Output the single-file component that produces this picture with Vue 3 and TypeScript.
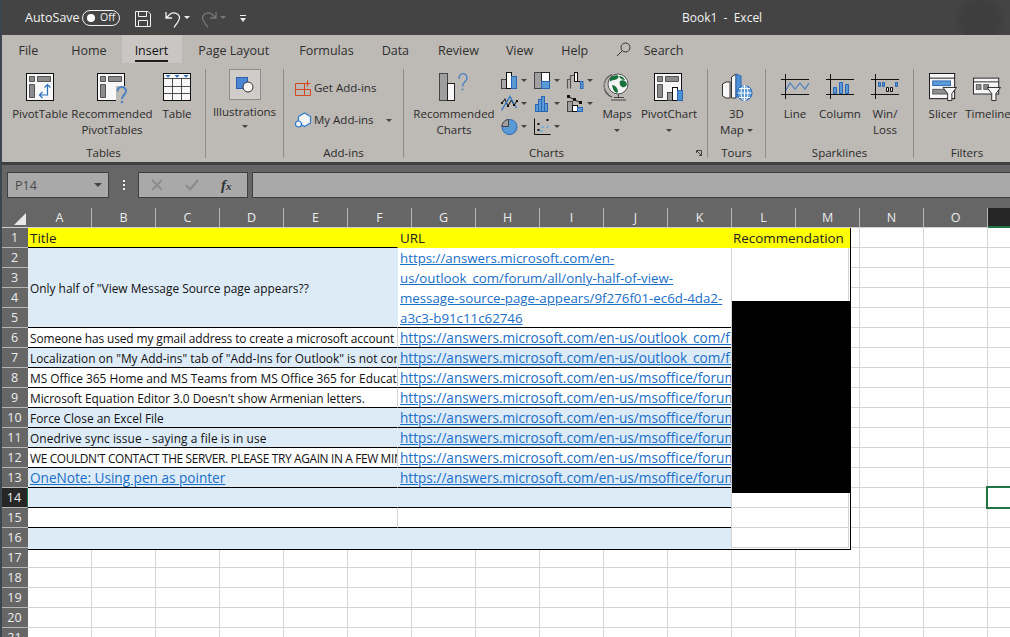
<script setup lang="ts">
interface Row { n: number; title: string; url: string; blue: boolean; titleLink?: boolean; fit?: string }
const base1 = 'https://answers.microsoft.com/en-us/outlook_com/forum/all/'
const base2 = 'https://answers.microsoft.com/en-us/msoffice/forum/all/'
const rows: Row[] = [
  { n: 6, title: 'Someone has used my gmail address to create a microsoft account', url: base1, blue: false, fit: 'tight' },
  { n: 7, title: 'Localization on "My Add-ins" tab of "Add-Ins for Outlook" is not correct', url: base1, blue: true },
  { n: 8, title: 'MS Office 365 Home and MS Teams from MS Office 365 for Education', url: base2, blue: false },
  { n: 9, title: "Microsoft Equation Editor 3.0 Doesn't show Armenian letters.", url: base2, blue: false, fit: 'slight' },
  { n: 10, title: 'Force Close an Excel File', url: base2, blue: true },
  { n: 11, title: 'Onedrive sync issue - saying a file is in use', url: base2, blue: true, fit: 'loose' },
  { n: 12, title: "WE COULDN'T CONTACT THE SERVER. PLEASE TRY AGAIN IN A FEW MINUTES", url: base2, blue: false, fit: 'caps' },
  { n: 13, title: 'OneNote: Using pen as pointer', url: base2, blue: true, titleLink: true },
  { n: 14, title: '', url: '', blue: true },
  { n: 15, title: '', url: '', blue: false },
  { n: 16, title: '', url: '', blue: true },
]
const tabs = ['Home', 'Insert', 'Page Layout', 'Formulas', 'Data', 'Review', 'View', 'Help']
const cols = 'ABCDEFGHIJKLMNOP'.split('')
const rowNums = Array.from({ length: 21 }, (_, i) => i + 1)
</script>

<template>
  <div class="app">
    <div class="edge"></div>
    <div class="main">
      <header class="titlebar">
        <span class="autosave">AutoSave</span>
        <span class="toggle"><i class="dot"></i><span class="off">Off</span></span>
        <svg class="qa qa-save" width="16" height="16" viewBox="0 0 16 16" fill="none" stroke="#f2f2f2">
          <path d="M.5.5H13L15.500 3V15.500H.5Z" /><path d="M3.500.5V5.500H11.500V.5M3.500 15.500V9.500H12.500V15.500" />
        </svg>
        <svg class="qa qa-undo" width="16" height="18" viewBox="0 0 16 18" fill="none" stroke="#f2f2f2" stroke-width="1.300">
          <path d="M1 1V7H7M1 7L5 3.200C8 1 13 1.800 14.400 5.500C15.400 9 12 12 9 16.500" />
        </svg>
        <i class="tcaret light"></i>
        <svg class="qa qa-redo" width="16" height="18" viewBox="0 0 16 18" fill="none" stroke="#777" stroke-width="1.300">
          <path d="M15 1V7H9M15 7L11 3.200C8 1 3 1.800 1.600 5.500C.6 9 4 12 7 16.500" />
        </svg>
        <i class="tcaret dim"></i>
        <svg class="qa-more" width="6" height="8" viewBox="0 0 6 8"><path d="M0 .5H6" stroke="#eee" /><path d="M0 3H6L3 7Z" fill="#eee" /></svg>
        <span class="doc">Book1 &nbsp;-&nbsp; Excel</span>
      </header>

      <nav class="tabs">
        <span class="tab file">File</span>
        <span v-for="t in tabs" :key="t" class="tab" :class="{ active: t === 'Insert' }"><span class="tab-t">{{ t }}</span></span>
        <svg class="search-ic" width="15" height="15" viewBox="0 0 15 15" fill="none" stroke="#333"><circle cx="9.500" cy="5.500" r="4.500" /><path d="M6.300 8.700L1 14" /></svg>
        <span class="search">Search</span>
      </nav>

      <section class="ribbon">
        <div class="group g-tables">
          <div class="gbody">
            <div class="rb w60">
              <svg width="28" height="28" viewBox="0 0 28 28">
                <rect x=".5" y=".5" width="27" height="27" fill="#f7f7f7" stroke="#111" />
                <path d="M3.500 3.500H8.500V8.500H3.500ZM11.500 3.500H24.500V8.500H11.500ZM3.500 11.500H8.500V24.500H3.500Z" fill="#8c8c8c" stroke="#555" />
                <path d="M14 22H21.500V12M18.500 14.500L21.500 11.500L24.500 14.500M16.500 19L13.500 22L16.500 25" fill="none" stroke="#2b6fc0" stroke-width="1.200" />
              </svg>
              <span class="lb">PivotTable</span>
            </div>
            <div class="rb w84">
              <svg width="30" height="28" viewBox="0 0 30 28">
                <rect x=".5" y=".5" width="27" height="27" fill="#f7f7f7" stroke="#111" />
                <path d="M3.500 3.500H8.500V8.500H3.500ZM11.500 3.500H24.500V8.500H11.500ZM3.500 11.500H8.500V24.500H3.500Z" fill="#8c8c8c" stroke="#555" />
                <rect x="19" y="13" width="11" height="16" fill="#bdb9b5" />
                <path d="M20.500 18.500C20.500 12.500 29 12.500 29 18C29 22 25 21.500 25 26" fill="none" stroke="#4d82c4" stroke-width="2" />
                <circle cx="25" cy="29" r="1.300" fill="#4d82c4" />
              </svg>
              <span class="lb">Recommended<br />PivotTables</span>
            </div>
            <div class="rb w36 ml5">
              <svg width="28" height="28" viewBox="0 0 28 28">
                <rect x=".5" y=".5" width="27" height="27" fill="#f7f7f7" stroke="#111" />
                <path d="M.5 5.500H27.500M.5 13.500H27.500M.5 20.500H27.500M9.500 5.500V27.500M18.500 5.500V27.500" fill="none" stroke="#222" stroke-width=".8" />
                <path d="M2.500 2H7.500L5 4.700ZM11.500 2H16.500L14 4.700ZM20.500 2H25.500L23 4.700Z" fill="#2b6fc0" />
              </svg>
              <span class="lb">Table</span>
            </div>
          </div>
          <div class="gl">Tables</div>
        </div>

        <div class="group g-illus">
          <div class="gbody">
            <div class="illus">
              <span class="illus-box">
                <svg width="18" height="16" viewBox="0 0 18 16">
                  <rect x=".5" y=".5" width="11" height="11" fill="#4a86d4" stroke="#2c5fa8" />
                  <circle cx="12" cy="10" r="5" fill="#f7f7f7" stroke="#333" />
                </svg>
              </span>
              <span class="lb illus-lb">Illustrations</span>
              <i class="caret"></i>
            </div>
          </div>
          <div class="gl">&nbsp;</div>
        </div>

        <div class="group g-addins">
          <div class="gbody addin-list">
            <div class="addin">
              <svg width="16" height="16" viewBox="0 0 16 16" fill="none" stroke="#d1481f">
                <path d="M.5 3.500H9.500V15.500H.5ZM.5 9.500H15.500V15.500H9.500M9.500 9.500V3.500M12.500 .5V6.500M9.500 3.500H15.500" />
              </svg>
              <span class="lb">Get Add-ins</span>
            </div>
            <div class="addin">
              <svg width="16" height="16" viewBox="0 0 16 16" stroke="#2b79c9" stroke-width="1.200">
                <path d="M9.500 1L15.500 4.500V11L9.500 14.500L3.500 11V4.500Z" fill="#f4f4f4" />
                <circle cx="3.500" cy="12" r="3" fill="#f4f4f4" />
              </svg>
              <span class="lb">My Add-ins</span>
              <i class="caret addin-caret"></i>
            </div>
          </div>
          <div class="gl">Add-ins</div>
        </div>

        <div class="group g-charts">
          <div class="gbody">
            <div class="rb w84">
              <svg width="30" height="28" viewBox="0 0 30 28">
                <rect x=".5" y=".5" width="8" height="27" fill="#9f9f9f" stroke="#444" />
                <rect x="8.500" y="10.500" width="7" height="17" fill="#f8f8f8" stroke="#222" />
                <path d="M20 6C20 -1 28 -1 28 5C28 9 23.500 8.500 23.500 13.500" fill="none" stroke="#4d82c4" stroke-width="1.400" />
                <circle cx="23.500" cy="16.500" r="1" fill="#4d82c4" />
              </svg>
              <span class="lb">Recommended<br />Charts</span>
            </div>
            <div class="chart-grid">
              <div class="ci">
                <svg width="17" height="18" viewBox="0 0 17 18"><rect x=".5" y="7.500" width="5" height="9" fill="#a8a8a8" stroke="#444" /><rect x="5.500" y=".5" width="5" height="16" fill="#fff" stroke="#111" /><rect x="10.500" y="4.500" width="5" height="12" fill="#5b9bd5" stroke="#2a66b4" /></svg><i class="caret"></i>
              </div>
              <div class="ci">
                <svg width="17" height="18" viewBox="0 0 17 18"><rect x=".5" y=".5" width="7" height="16" fill="#a0a0a0" stroke="#444" /><rect x="7.500" y=".5" width="8" height="9" fill="#fff" stroke="#222" /><rect x="7.500" y="9.500" width="8" height="7" fill="#5b9bd5" stroke="#2a66b4" /></svg><i class="caret"></i>
              </div>
              <div class="ci">
                <svg width="17" height="18" viewBox="0 0 17 18" fill="none"><path d="M.5 16.500V7.500H3.500V3.500H8M3.500 16.500V7.500" stroke="#555" stroke-width="1.200" /><rect x="7.500" y=".5" width="3" height="9" fill="#fff" stroke="#111" /><path d="M10.500 9.500H14" stroke="#111" /><rect x="13.500" y="9.500" width="2.500" height="7" fill="#5b9bd5" stroke="#2a66b4" /></svg><i class="caret"></i>
              </div>
              <div class="ci">
                <svg width="17" height="18" viewBox="0 0 17 18" fill="none"><path d="M1 8L4 4L7 11L10.500 5L13 10L16 6" stroke="#222" stroke-width="1.100" /><path d="M.5 15.500L9 1.500L15.500 13" stroke="#2f74c6" stroke-width="1.300" /><path d="M0 7h2v2H0zM6 10h2v2H6zM12 9h2v2h-2zM15 5h2v2h-2z" fill="#111" /></svg><i class="caret"></i>
              </div>
              <div class="ci">
                <svg width="17" height="18" viewBox="0 0 17 18" fill="#5b9bd5" stroke="#2a66b4"><rect x="1.500" y="9.500" width="3" height="7" /><rect x="4.500" y="4.500" width="3" height="12" /><rect x="7.500" y="1.500" width="3" height="15" /><rect x="10.500" y="8.500" width="3" height="8" /></svg><i class="caret"></i>
              </div>
              <div class="ci">
                <svg width="17" height="18" viewBox="0 0 17 18"><rect x=".5" y="6.500" width="5" height="10" fill="#a0a0a0" stroke="#444" /><rect x="5.500" y="10.500" width="5" height="6" fill="#fff" stroke="#111" /><rect x="10.500" y="12.500" width="5" height="4" fill="#5b9bd5" stroke="#2a66b4" /><path d="M2 2L14 8" stroke="#222" /><path d="M0 0h3v3H0zM6 3h3v3H6zM12 6h3v3h-3z" fill="#111" /></svg><i class="caret"></i>
              </div>
              <div class="ci">
                <svg width="17" height="18" viewBox="0 0 17 18"><circle cx="8.500" cy="9" r="7.500" fill="#5b9bd5" stroke="#2a66b4" /><path d="M7.500 1.500A7 7 0 0 0 1 8.500H7.500Z" fill="#a0a0a0" stroke="#444" /></svg><i class="caret"></i>
              </div>
              <div class="ci">
                <svg width="17" height="18" viewBox="0 0 17 18"><path d="M.5 .5V16.500H16.500" fill="none" stroke="#111" /><path d="M3.500 5h2v2h-2zM12.500 1h2v2h-2zM3.500 11h2v2h-2z" fill="#111" /><path d="M7.500 8h2v2h-2zM12.500 8h2v2h-2zM6.500 12h2v2h-2z" fill="#6ab0e0" /></svg><i class="caret"></i>
              </div>
            </div>
            <div class="rb w34">
              <svg width="26" height="28" viewBox="0 0 26 28" fill="none">
                <path d="M8 1.500A12 12 0 0 0 8 24" stroke="#4a4a4a" stroke-width="1.200" />
                <path d="M5 4A10 10 0 0 0 5 21" stroke="#8a8a8a" stroke-width="1" />
                <circle cx="14" cy="11" r="10" fill="#f4f4f4" stroke="#333" stroke-width=".8" />
                <path d="M9 3C13 1 16 3 14 5C12 8 8 6 6 9C5 6 6 4 9 3ZM16 8C20 6 23 9 23 12C22 13 20 15 18 14C16 13 15 10 16 8ZM8 12C11 12 14 15 14 19C12 21 10 18 9 16Z" fill="#17713a" />
                <path d="M15 3C18 3 20 5 21 7C19 7 16 6 15 3Z" fill="#17713a" />
                <path d="M10 24.500H20M14.500 21V24.500M7 27H22" stroke="#444" stroke-width="1" />
              </svg>
              <span class="lb">Maps</span>
              <i class="caret lb-caret"></i>
            </div>
            <div class="rb w66">
              <svg width="30" height="28" viewBox="0 0 30 28">
                <rect x=".5" y=".5" width="27" height="27" fill="#f7f7f7" stroke="#111" />
                <path d="M3.500 3.500H8.500V8.500H3.500ZM11.500 3.500H24.500V8.500H11.500ZM3.500 11.500H8.500V24.500H3.500Z" fill="#8c8c8c" stroke="#555" />
                <rect x="13.500" y="19.500" width="5" height="8" fill="#999" stroke="#444" />
                <rect x="18.500" y="14.500" width="5" height="13" fill="#fff" stroke="#111" />
                <rect x="23.500" y="17.500" width="5" height="10" fill="#4f8fd4" stroke="#2a66b4" />
              </svg>
              <span class="lb">PivotChart</span>
              <i class="caret lb-caret"></i>
            </div>
          </div>
          <div class="gl gl-charts">Charts<svg class="launcher" width="6" height="6" viewBox="0 0 6 6"><path d="M.5 3V.5H5.500V5.500H3" fill="none" stroke="#444" /><path d="M.5 .5L5 5M3 5.500H5.500V3" fill="none" stroke="#444" /></svg></div>
        </div>

        <div class="group g-tours">
          <div class="gbody">
            <div class="rb w56">
              <svg width="32" height="28" viewBox="0 0 32 28">
                <path d="M1.500 11L5 9H9V25H5L1.500 23Z" fill="#f7f7f7" stroke="#333" />
                <path d="M10.500 4L15 1V25H10.500Z" fill="#f7f7f7" stroke="#333" />
                <path d="M15 1L20 3V17L15 25Z" fill="#4f8fd4" stroke="#2a66b4" />
                <circle cx="23.500" cy="20" r="7.500" fill="#5b9bd5" stroke="#2a66b4" />
                <path d="M16.500 20H30.500M23.500 12.500V27.500M18 15.500H29M18 24.500H29" stroke="#fff" fill="none" />
                <ellipse cx="23.500" cy="20" rx="3.500" ry="7.500" fill="none" stroke="#fff" />
              </svg>
              <span class="lb">3D<br />Map<i class="caret inline-caret"></i></span>
            </div>
          </div>
          <div class="gl">Tours</div>
        </div>

        <div class="group g-spark">
          <div class="gbody">
            <div class="rb w44">
              <svg width="28" height="28" viewBox="0 0 28 28" fill="none">
                <path d="M0 6.500H28M0 21.500H28M4.500 1V26" stroke="#111" />
                <path d="M5 17L9 10L14 16L19 10L24 16L28 10" stroke="#3f78c0" stroke-width="1.100" />
              </svg>
              <span class="lb">Line</span>
            </div>
            <div class="rb w44 ml1">
              <svg width="28" height="28" viewBox="0 0 28 28" fill="none">
                <path d="M0 6.500H28M0 21.500H28M4.500 1V26" stroke="#111" />
                <path d="M7.500 14.500H10.500V20.500H7.500ZM13.500 9.500H16.500V20.500H13.500ZM19.500 11.500H22.500V20.500H19.500Z" fill="#5b9bd5" stroke="#2a66b4" />
              </svg>
              <span class="lb">Column</span>
            </div>
            <div class="rb w44 ml1">
              <svg width="28" height="28" viewBox="0 0 28 28" fill="none">
                <path d="M0 6.500H28M0 21.500H28M4.500 1V26" stroke="#111" />
                <path d="M7.500 9.500H9.500V13.500H7.500ZM11.500 9.500H13.500V13.500H11.500ZM24.500 9.500H26.500V13.500H24.500Z" fill="#5b9bd5" stroke="#2a66b4" />
                <path d="M15.500 14.500H17.500V18.500H15.500ZM19.500 14.500H21.500V18.500H19.500Z" fill="#ddd" stroke="#111" />
              </svg>
              <span class="lb">Win/<br />Loss</span>
            </div>
          </div>
          <div class="gl">Sparklines</div>
        </div>

        <div class="group g-filters">
          <div class="gbody">
            <div class="rb w44">
              <svg width="30" height="30" viewBox="0 0 30 30">
                <rect x=".5" y=".5" width="27" height="27" fill="#f7f7f7" stroke="#111" />
                <path d="M.5 5.500H27.500" stroke="#111" />
                <rect x="4" y="8.500" width="19" height="5" fill="#5b9bd5" stroke="#2a66b4" />
                <rect x="4" y="17.500" width="19" height="5" fill="#8f8f8f" stroke="#555" />
                <path d="M15 15.500H29.500L24.500 22V29.500H20V22Z" fill="#f7f7f7" stroke="#222" />
              </svg>
              <span class="lb">Slicer</span>
            </div>
            <div class="rb w46">
              <svg width="32" height="30" viewBox="0 0 32 30">
                <rect x=".5" y="5.500" width="27" height="17" fill="#f7f7f7" stroke="#222" />
                <path d="M.5 9.500H27.500" stroke="#222" />
                <rect x="3.500" y="12.500" width="5" height="5" fill="#8f8f8f" stroke="#555" />
                <rect x="11.500" y="12.500" width="5" height="5" fill="#8f8f8f" stroke="#555" />
                <path d="M15 15.500H29.500L24.500 22V29.500H20V22Z" fill="#f7f7f7" stroke="#222" />
              </svg>
              <span class="lb">Timeline</span>
            </div>
          </div>
          <div class="gl">Filters</div>
        </div>
      </section>

      <section class="fbar">
        <div class="namebox"><span>P14</span><i class="caret nb-caret"></i></div>
        <div class="fdots"><i></i><i></i><i></i></div>
        <div class="fbtns">
          <svg width="12" height="12" viewBox="0 0 12 12"><path d="M1 1L11 11M11 1L1 11" stroke="#8b8b8b" stroke-width="1.800" /></svg>
          <svg width="14" height="12" viewBox="0 0 14 12"><path d="M1 6L5 10.500L13 1" fill="none" stroke="#8b8b8b" stroke-width="2.200" /></svg>
          <span class="fx">f<small>x</small></span>
        </div>
        <div class="finput"></div>
      </section>

      <section class="colheads">
        <div class="corner"><i></i></div>
        <div v-for="c in cols" :key="c" class="ch" :class="{ sel: c === 'P' }">{{ c === 'P' ? '' : c }}</div>
      </section>

      <section class="sheet">
        <div class="rowheads">
          <div v-for="n in rowNums" :key="n" class="rh" :class="{ sel: n === 14 }">{{ n }}</div>
        </div>
        <div class="canvas">
          <div class="tbl">
            <div class="c t head title-h">Title</div>
            <div class="c u head">URL</div>
            <div class="c r head">Recommendation</div>

            <div class="c t blue merged">Only half of "View Message Source page appears??</div>
            <div class="c u merged-url"><a>https://answers.microsoft.com/en-<br />us/outlook_com/forum/all/only-half-of-view-<br />message-source-page-appears/9f276f01-ec6d-4da2-<br />a3c3-b91c11c62746</a></div>
            <div class="c r merged-r"></div>

            <template v-for="r in rows" :key="r.n">
              <div class="c t" :class="[r.fit, { blue: r.blue, lastline: r.n === 16 }]"><a v-if="r.titleLink">{{ r.title }}</a><template v-else>{{ r.title }}</template></div>
              <div class="c u" :class="{ blue: r.blue, lastline: r.n === 16 }"><a v-if="r.url">{{ r.url }}</a></div>
              <div class="c r" :class="{ lastr: r.n === 16 }"></div>
            </template>
          </div>
          <div class="redact"></div>
          <div class="selected"></div>
        </div>
      </section>
    </div>
  </div>
</template>

<style>
html, body { margin: 0; padding: 0; overflow: hidden; background: #fff; }
</style>

<style scoped>
.app { width: 1010px; height: 637px; display: flex; overflow: hidden; font-family: "Open Sans", "Liberation Sans", sans-serif; }
.edge { width: 2px; flex: none; background: #3d4650; }
.main { width: 1008px; flex: none; display: flex; flex-direction: column; overflow: hidden; }

.titlebar { height: 35px; flex: none; display: flex; align-items: center; color: #f2f2f2; background: radial-gradient(circle at 978px 20px, #3e3e3e 0 18px, #444 26px); font-size: 12.500px; }
.autosave { margin-left: 23px; width: 57px; }
.toggle { width: 38px; height: 16px; box-sizing: border-box; border: 1.500px solid #f2f2f2; border-radius: 9px; display: flex; align-items: center; padding-left: 4px; }
.dot { width: 8px; height: 8px; background: #fff; border-radius: 50%; }
.off { font-size: 10.500px; margin-left: 5px; line-height: 1; }
.qa { align-self: flex-start; margin-top: 11px; }
.qa-save { margin-left: 15px; }
.qa-undo { margin-left: 14px; }
.tcaret { width: 0; height: 0; border: 3px solid transparent; border-top: 3.500px solid #eee; border-bottom: 0; margin-left: 3px; }
.tcaret.dim { border-top-color: #777; }
.qa-redo { margin-left: 11px; }
.qa-more { margin-left: 14px; margin-top: 2px; }
.doc { margin-left: 436px; font-size: 12px; }

.tabs { height: 28px; flex: none; box-sizing: border-box; background: #bdb9b5; display: flex; align-items: stretch; font-size: 12.500px; color: #2f2f2f; }
.tab { display: flex; align-items: center; padding: 2px 13.500px 0; margin-right: 2px; position: relative; white-space: nowrap; }
.tab.file { margin-left: 3px; margin-right: 6px; }
.tab:nth-child(3) { padding-left: 12.500px; padding-right: 13.500px; margin-right: 3px; }
.tab:nth-child(5) { margin-left: 1px; }
.tab:nth-child(6) { margin-left: -1px; }
.tab:nth-child(8) { margin-left: -2px; }
.tab:nth-child(9) { margin-left: -1px; }
.tab.active { background: #c9c6c3; color: #111; padding-top: 0; }
.tab.active .tab-t { align-self: stretch; display: flex; align-items: center; border-bottom: 2.500px solid #1f1f1f; margin-bottom: 1px; padding-top: 5.500px; }
.search-ic { align-self: center; margin-left: 12px; }
.search { align-self: center; margin-left: 13px; padding-top: 2px; }

.ribbon { height: 99px; flex: none; box-sizing: border-box; background: #bdb9b5; padding-top: 6px; display: flex; color: #2b2b2b; overflow: hidden; }
.group { flex: none; box-sizing: border-box; height: 89px; display: flex; flex-direction: column; position: relative; border-right: 1px solid #8f8c89; }
.gbody { height: 76px; display: flex; flex: none; }
.gl { height: 13px; line-height: 13px; text-align: center; font-size: 11.500px; position: relative; margin-top: 1px; white-space: nowrap; }
.g-tables { width: 204px; padding-left: 8px; }
.g-tables .gl { margin-left: -8px; }
.g-illus { width: 78px; }
.g-addins { width: 120px; }
.g-charts { width: 304px; padding-left: 8px; }
.g-tours { width: 58px; }
.g-spark { width: 148px; padding-left: 7px; }
.g-spark .gl { margin-left: -7px; }
.g-filters { width: 120px; border-right: 0; padding-left: 7px; }
.g-filters .gl { margin-left: -7px; padding-right: 14px; }
.gl-charts { margin-left: -8px; padding-right: 18px; }
.launcher { position: absolute; right: 5px; top: 4px; }

.rb { display: flex; flex-direction: column; align-items: center; padding-top: 4px; flex: none; }
.rb svg { overflow: visible; flex: none; height: 28px; }
.lb { font-size: 11.500px; line-height: 16px; text-align: center; white-space: nowrap; }
.rb .lb { margin-top: 5px; }
.w34 { width: 34px; } .w36 { width: 36px; } .w44 { width: 44px; } .w46 { width: 46px; } .w56 { width: 57px; } .w60 { width: 60px; } .w66 { width: 66px; margin-left: 2px; } .w84 { width: 84px; }
.ml5 { margin-left: 5px; } .ml1 { margin-left: 1px; }

.illus { width: 77px; display: flex; flex-direction: column; align-items: center; }
.illus-box { width: 32px; height: 31px; box-sizing: border-box; background: #cfccc9; border: 1px solid #8f8c89; display: flex; align-items: center; justify-content: center; }
.illus-lb { margin-top: 4px; }
.illus .caret { margin-top: 5px; }

.addin-list { flex-direction: column; padding: 11px 0 0 11px; box-sizing: border-box; gap: 16px; }
.addin { display: flex; align-items: center; height: 16px; gap: 3px; }
.addin svg { overflow: visible; }
.addin-caret { margin-left: 9px; }

.caret { display: block; width: 0; height: 0; border: 3px solid transparent; border-top: 3px solid #444; border-bottom: 0; flex: none; }
.lb-caret { margin-top: 7px; }
.inline-caret { display: inline-block; margin-left: 3px; vertical-align: middle; }

.chart-grid { width: 99px; margin-left: 5px; display: grid; grid-template-columns: repeat(3, 33px); grid-auto-rows: 23px; height: 69px; }
.ci { display: flex; align-items: center; gap: 3px; }
.ci svg { overflow: visible; }

.fbar { height: 46px; flex: none; box-sizing: border-box; background: #666; border-top: 3px solid #3f3f3f; display: flex; padding: 7px 0 10px 5px; }
.namebox { width: 102px; box-sizing: border-box; background: #a9a9a9; border: 1px solid #3f3f3f; display: flex; align-items: center; justify-content: space-between; padding: 0 6px 0 7px; font-size: 12.500px; color: #4a4a4a; }
.nb-caret { border-width: 4px; border-top: 4px solid #444; border-bottom: 0; }
.fdots { width: 29px; display: flex; flex-direction: column; align-items: center; justify-content: center; gap: 2px; }
.fdots i { width: 2px; height: 2px; background: #eee; }
.fbtns { width: 110px; box-sizing: border-box; background: #a9a9a9; border: 1px solid #3f3f3f; display: flex; align-items: center; gap: 22px; padding-left: 12px; }
.fx { font-family: "Liberation Serif", serif; font-style: italic; font-weight: 700; font-size: 15px; color: #333; }
.fx small { font-size: 11px; }
.finput { flex: 1; margin-left: 4px; background: #a9a9a9; border: 1px solid #3f3f3f; border-right: 0; }

.colheads { height: 20px; flex: none; box-sizing: border-box; display: flex; background: #666; border-bottom: 1px solid #d0d0d0; color: #ededed; font-size: 12.500px; line-height: 19px; }
.corner { width: 26px; flex: none; position: relative; }
.corner i { position: absolute; right: 2px; bottom: 2px; width: 0; height: 0; border-left: 12px solid transparent; border-bottom: 12px solid #e8e8e8; }
.ch { width: 64px; flex: none; box-sizing: border-box; text-align: center; border-right: 1px solid #b8b8b8; }
.ch.sel { background: #262626; border-bottom: 2px solid #217346; border-right: 0; height: 20px; }

.sheet { flex: 1; display: flex; min-height: 0; }
.rowheads { width: 26px; flex: none; background: #666; }
.rh { height: 20px; box-sizing: border-box; text-align: center; line-height: 19px; font-size: 12.500px; color: #ededed; border-bottom: 1px solid #b8b8b8; padding-right: 1px; }
.rh.sel { background: #262626; border-right: 1.500px solid #217346; }
.canvas { flex: 1; position: relative; overflow: hidden; background-color: #fff;
  background-image: linear-gradient(to right, transparent 63px, #d4d4d4 63px), linear-gradient(to bottom, transparent 19px, #d4d4d4 19px);
  background-size: 64px 20px; }

.tbl { width: 823px; box-sizing: border-box; display: grid; grid-template-columns: 370px 333px 119px; grid-template-rows: repeat(15, 20px) 21px; border-right: 1px solid #000; border-bottom: 1px solid #000; background: #fff; font-size: 11.900px; color: #111; }
.c { box-sizing: border-box; line-height: 20px; white-space: nowrap; overflow: hidden; min-width: 0; }
a { color: #1a6fc9; text-decoration: underline; text-underline-offset: 1px; font-size: 13.600px; }
.merged-url a { font-size: 13.300px; }
.tight { letter-spacing: -.1px; }
.slight { letter-spacing: -.05px; }
.loose { letter-spacing: .09px; }
.caps { letter-spacing: -.35px; }
.t { padding-left: 2px; background: #fff; border-bottom: 1px solid #000; border-right: 1px solid #d4d4d4; }
.u { padding-left: 2px; background: #fff; border-bottom: 1px solid #000; }
.r { background: #fff; border-left: 1px solid #d4d4d4; border-right: 1px solid #d4d4d4; border-bottom: 1px solid #d4d4d4; margin-right: 1px; }
.blue { background: #ddebf7; border-right-color: #ddebf7; }
.lastline { border-bottom: 0; }
.lastr { margin-bottom: 1px; }
.head { background: #ff0; color: #222; font-size: 13.400px; }
.u.head { border-bottom: 0; }
.r.head { border: 0; margin: 0; padding-left: 2px; }
.title-h { border-right-color: #ff0; }
.merged { grid-row: span 4; display: flex; align-items: center; }
.merged-url { grid-row: span 4; line-height: 20px; white-space: normal; }
.merged-r { grid-row: span 4; }
.redact { position: absolute; left: 704px; top: 73px; width: 119px; height: 192px; background: #000; }
.selected { position: absolute; left: 958px; top: 258px; width: 60px; height: 23px; box-sizing: border-box; border: 2px solid #217346; }
</style>
